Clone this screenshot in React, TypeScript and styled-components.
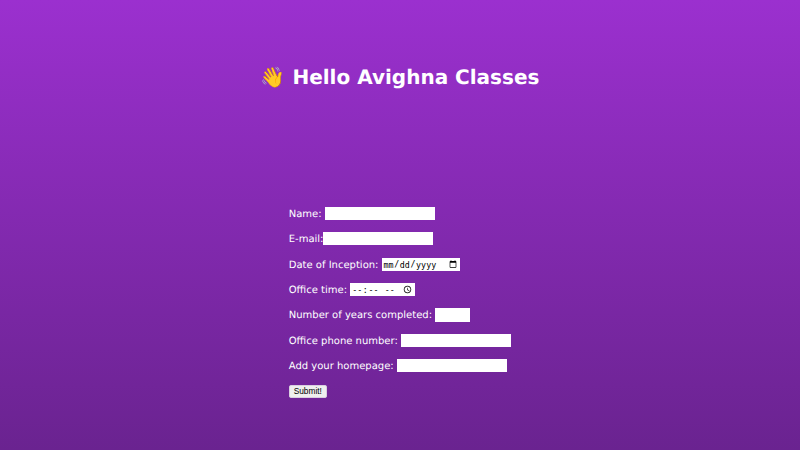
import styled, { createGlobalStyle } from "styled-components";

const GlobalStyle = createGlobalStyle`
  html, body {
    margin: 0;
    padding: 0;
    height: 100%;
  }
  body {
    font-family: "DejaVu Sans", sans-serif;
    color: #fff;
    overflow: hidden;
    text-rendering: geometricPrecision;
  }
`;

const Page = styled.div`
  zoom: 0.625;
  width: 1280px;
  height: 720px;
  overflow: hidden;
  background: linear-gradient(to bottom, #9b30cf, #6a2390);
  display: flex;
  flex-direction: column;
  align-items: center;
`;

const Heading = styled.h1`
  margin: 106px 0 0;
  font-size: 32px;
  line-height: 38px;
  font-weight: 700;
`;

const Form = styled.form`
  margin-top: 187px;
  width: 356px;
  display: flex;
  flex-direction: column;
  align-items: flex-start;
`;

const Row = styled.div`
  font-size: 16px;
  height: 40.6px;
  white-space: pre;
`;

const Field = styled.input<{ $width: number }>`
  border: 0;
  padding: 1px 2px;
  height: 21px;
  box-sizing: border-box;
  background: #fff;
  width: ${(p) => p.$width}px;
`;

const Submit = styled.button`
  font-family: "Liberation Sans", sans-serif;
  font-size: 13.33px;
  height: 21px;
  width: 61px;
  padding: 0;
  color: #000;
  background: #efefef;
  border: 1px solid #d9cfe0;
  border-radius: 3px;
`;

export default function App() {
  return (
    <Page>
      <GlobalStyle />
      <Heading>👋 Hello Avighna Classes</Heading>
      <Form>
        <Row>Name: <Field type="text" $width={176} /></Row>
        <Row>E-mail:<Field type="email" $width={176} /></Row>
        <Row>Date of Inception: <Field type="date" $width={125} /></Row>
        <Row>Office time: <Field type="time" $width={104} /></Row>
        <Row>Number of years completed: <Field type="number" $width={56} /></Row>
        <Row>Office phone number: <Field type="tel" $width={176} /></Row>
        <Row>Add your homepage: <Field type="url" $width={176} /></Row>
        <Submit type="submit">Submit!</Submit>
      </Form>
    </Page>
  );
}
